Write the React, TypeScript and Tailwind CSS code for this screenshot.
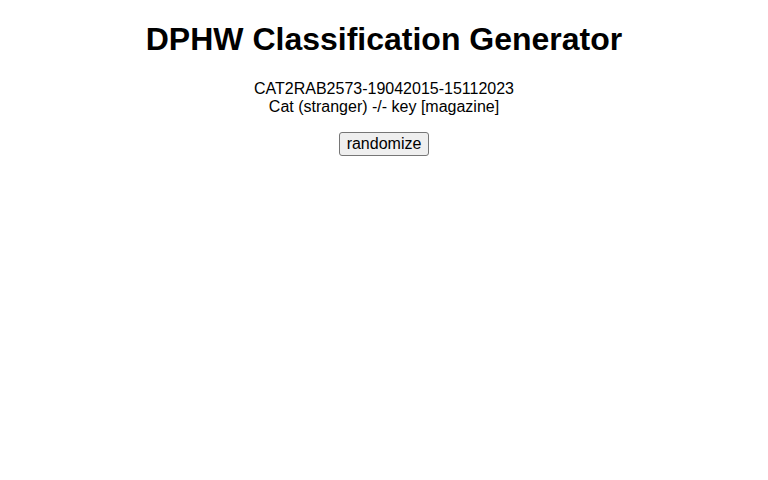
import React, { useState } from 'react';

const subjects = ['Cat', 'Dog', 'Owl', 'Fox'];

export default function App() {
    const [code] = useState('CAT2RAB2573-19042015-15112023');
    const [label] = useState('Cat (stranger) -/- key [magazine]');

    return (
        <div className="min-h-screen bg-white text-black text-center font-['Liberation_Sans',Arial,sans-serif]">
            <h1 className="text-[32px] font-bold leading-[37px] pt-[21px] pb-[22px]">DPHW Classification Generator</h1>
            <div className="text-base leading-[18px]">
                <div>{code}</div>
                <div>{label}</div>
            </div>
            <div className="mt-4">
                <button
                    type="button"
                    data-subjects={subjects.length}
                    className="h-6 px-[7px] text-base leading-[18px] bg-[#efefef] border border-[#767676] rounded-[3px] hover:bg-[#e5e5e5]"
                >
                    randomize
                </button>
            </div>
        </div>
    );
}
